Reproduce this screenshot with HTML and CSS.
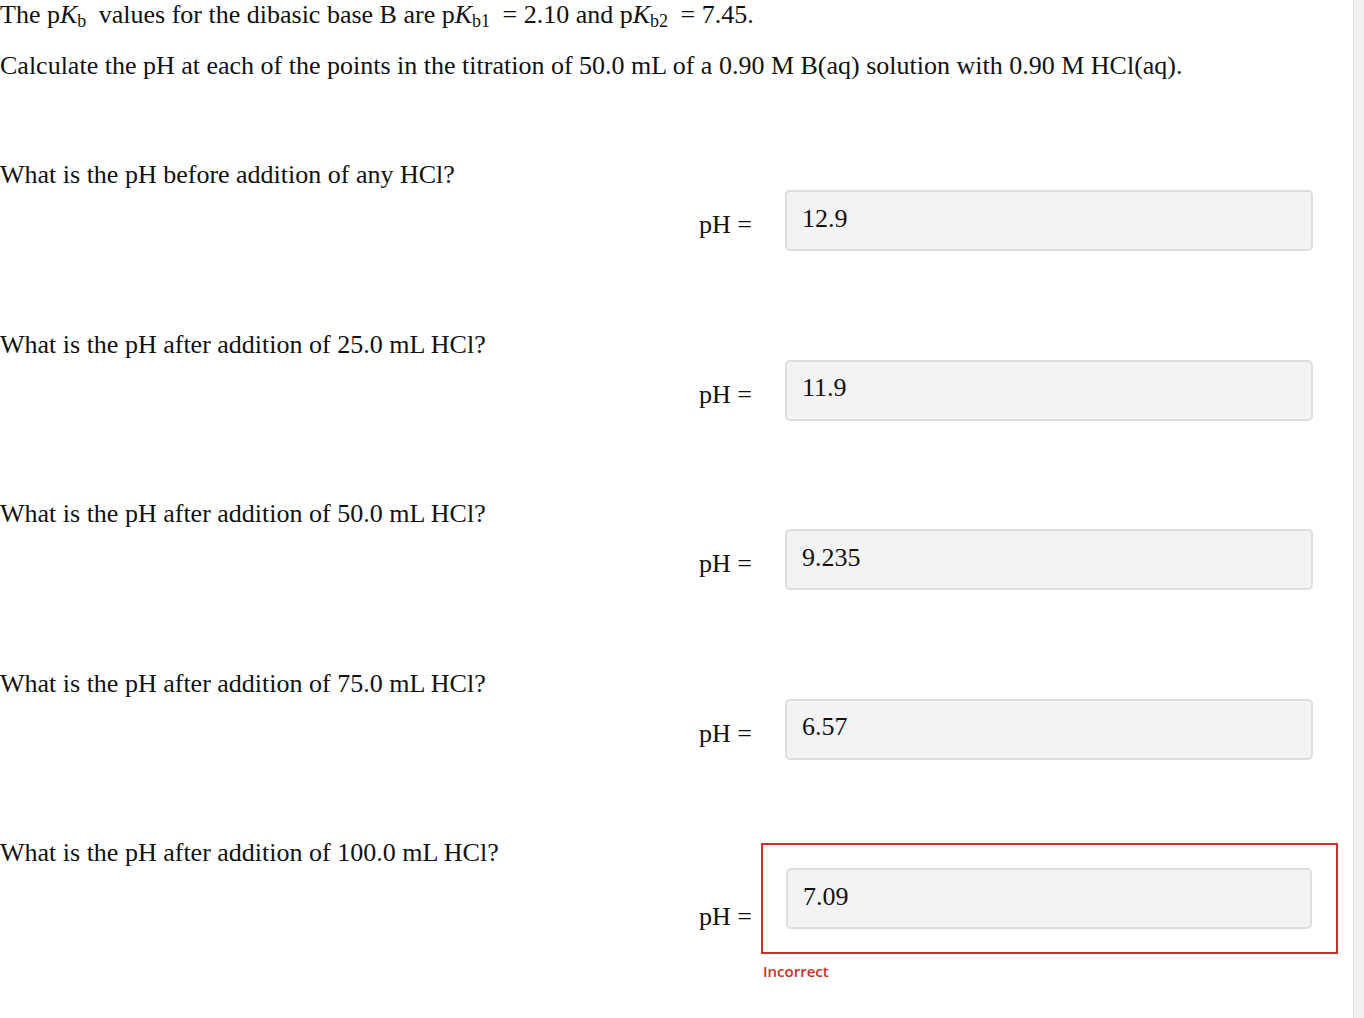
FILE: index.html
```html
<!DOCTYPE html>
<html lang="en">

<head>
    <meta charset="UTF-8">
    <meta name="viewport" content="width=device-width, initial-scale=1.0">
    <title>Titration of a dibasic base</title>
    <link rel="stylesheet" href="styles.css">
</head>

<body>
    <main class="page">
        <p class="intro">The p<i>K</i><sub>b</sub> values for the dibasic base B are p<i>K</i><sub>b1</sub> = 2.10 and p<i>K</i><sub>b2</sub> = 7.45.</p>
        <p class="intro second">Calculate the pH at each of the points in the titration of 50.0 mL of a 0.90 M B(aq) solution with 0.90 M HCl(aq).</p>

        <section class="part">
            <p class="question">What is the pH before addition of any HCl?</p>
            <div class="answer">
                <span class="label">pH =</span>
                <div class="field">
                    <div class="input">12.9</div>
                </div>
            </div>
        </section>

        <section class="part">
            <p class="question">What is the pH after addition of 25.0 mL HCl?</p>
            <div class="answer">
                <span class="label">pH =</span>
                <div class="field">
                    <div class="input">11.9</div>
                </div>
            </div>
        </section>

        <section class="part">
            <p class="question">What is the pH after addition of 50.0 mL HCl?</p>
            <div class="answer">
                <span class="label">pH =</span>
                <div class="field">
                    <div class="input">9.235</div>
                </div>
            </div>
        </section>

        <section class="part">
            <p class="question">What is the pH after addition of 75.0 mL HCl?</p>
            <div class="answer">
                <span class="label">pH =</span>
                <div class="field">
                    <div class="input">6.57</div>
                </div>
            </div>
        </section>

        <section class="part">
            <p class="question">What is the pH after addition of 100.0 mL HCl?</p>
            <div class="answer wrong">
                <span class="label">pH =</span>
                <div class="field">
                    <div class="input">7.09</div>
                </div>
            </div>
            <p class="feedback">Incorrect</p>
        </section>
    </main>
    <div class="scroll-strip"></div>
</body>

</html>
```

FILE: styles.css
```css
body {
    margin: 0;
    display: flex;
    min-height: 100vh;
    font-family: "Liberation Serif", "Times New Roman", serif;
    font-size: 26px;
    color: #111;
    background-color: #fff;
}

.page {
    flex: 1;
}

.scroll-strip {
    width: 10px;
    background-color: #f1f1f1;
    border-left: 1px solid #dedede;
}

p {
    margin: 0;
}

.intro {
    line-height: 29px;
}

.intro sub {
    font-size: 18px;
    line-height: 0;
    vertical-align: -4px;
    margin-right: 6px;
}

.intro.second {
    margin-top: 22px;
}

.part {
    margin-top: 78.5px;
}

.part:first-of-type {
    margin-top: 80px;
}

.question {
    line-height: 30px;
}

.answer {
    display: flex;
    align-items: center;
    margin-left: 699px;
}

.label {
    width: 62px;
    padding-top: 9px;
}

.field {
    padding-left: 24px;
}

.input {
    width: 528px;
    height: 61px;
    padding: 0 15px 4px;
    display: flex;
    align-items: center;
    box-sizing: border-box;
    border: 2px solid #dedede;
    border-radius: 5px;
    background-color: #f3f3f3;
}

.answer.wrong {
    align-items: flex-end;
}

.answer.wrong .label {
    padding-top: 0;
    margin-bottom: 22px;
}

.answer.wrong .field {
    margin-top: -25px;
    padding: 23px 24px 23px 23px;
    border: 2px solid #c9302c;
}

.answer.wrong .input {
    width: 526px;
}

.feedback {
    margin: 7px 0 0 763px;
    font-family: "Open Sans", "Noto Sans", sans-serif;
    font-size: 15px;
    font-weight: 600;
    color: #c9302c;
}
```
